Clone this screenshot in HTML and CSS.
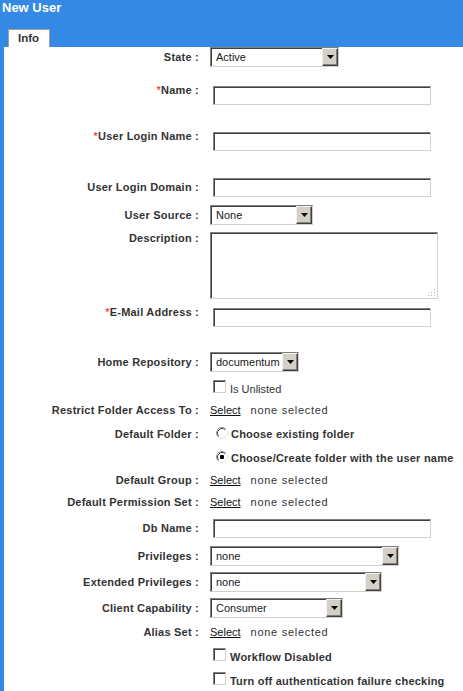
FILE: index.html
```html
<!DOCTYPE html>
<html>
<head>
<meta charset="utf-8">
<title>New User</title>
<link rel="stylesheet" href="styles.css">
</head>
<body>
<div class="title">New User</div>
<div class="tabs"><div class="tab">Info</div></div>
<div class="panel">
  <div class="form">
    <div class="row">
      <div class="lbl">State :</div>
      <div class="fld"><div class="select w-state"><span class="val">Active</span><span class="btn"><svg width="7" height="4" viewBox="0 0 7 4"><polygon points="0,0 7,0 3.5,4" fill="#000"/></svg></span></div></div>
    </div>
    <div class="row req-row mt17">
      <div class="lbl"><span class="req">*</span>Name :</div>
      <div class="fld"><div class="input"></div></div>
    </div>
    <div class="row req-row mt25">
      <div class="lbl"><span class="req">*</span>User Login Name :</div>
      <div class="fld"><div class="input"></div></div>
    </div>
    <div class="row mt27">
      <div class="lbl">User Login Domain :</div>
      <div class="fld"><div class="input"></div></div>
    </div>
    <div class="row mt8">
      <div class="lbl">User Source :</div>
      <div class="fld"><div class="select w-source"><span class="val">None</span><span class="btn"><svg width="7" height="4" viewBox="0 0 7 4"><polygon points="0,0 7,0 3.5,4" fill="#000"/></svg></span></div></div>
    </div>
    <div class="row top-row mt7">
      <div class="lbl">Description :</div>
      <div class="fld"><div class="textarea"><svg class="grip" width="9" height="9" viewBox="0 0 9 9"><g fill="#b0b0b0"><rect x="7" y="1" width="1" height="1"/><rect x="4" y="4" width="1" height="1"/><rect x="7" y="4" width="1" height="1"/><rect x="1" y="7" width="1" height="1"/><rect x="4" y="7" width="1" height="1"/><rect x="7" y="7" width="1" height="1"/></g></svg></div></div>
    </div>
    <div class="row req-row mt7">
      <div class="lbl"><span class="req">*</span>E-Mail Address :</div>
      <div class="fld"><div class="input"></div></div>
    </div>
    <div class="row mt25">
      <div class="lbl">Home Repository :</div>
      <div class="fld"><div class="select w-repo"><span class="val">documentum</span><span class="btn"><svg width="7" height="4" viewBox="0 0 7 4"><polygon points="0,0 7,0 3.5,4" fill="#000"/></svg></span></div></div>
    </div>
    <div class="row mt8">
      <div class="lbl"></div>
      <div class="fld check"><span class="cb"></span><span class="cb-text">Is Unlisted</span></div>
    </div>
    <div class="row mt8">
      <div class="lbl">Restrict Folder Access To :</div>
      <div class="fld text"><a class="link">Select</a><span class="none">none selected</span></div>
    </div>
    <div class="row mt11">
      <div class="lbl">Default Folder :</div>
      <div class="fld text"><svg class="radio" width="12" height="12" viewBox="0 0 12 12"><circle cx="6" cy="6" r="5.5" fill="#fff"/><path d="M2.11 9.89 A5.5 5.5 0 0 1 9.89 2.11" fill="none" stroke="#9a9a9a" stroke-width="1"/><path d="M2.82 9.18 A4.5 4.5 0 0 1 9.18 2.82" fill="none" stroke="#404040" stroke-width="1"/><path d="M9.89 2.11 A5.5 5.5 0 0 1 2.11 9.89" fill="none" stroke="#e4e2dc" stroke-width="1"/></svg><span class="radio-text">Choose existing folder</span></div>
    </div>
    <div class="row mt11">
      <div class="lbl"></div>
      <div class="fld text"><svg class="radio" width="12" height="12" viewBox="0 0 12 12"><circle cx="6" cy="6" r="5.5" fill="#fff"/><path d="M2.11 9.89 A5.5 5.5 0 0 1 9.89 2.11" fill="none" stroke="#9a9a9a" stroke-width="1"/><path d="M2.82 9.18 A4.5 4.5 0 0 1 9.18 2.82" fill="none" stroke="#404040" stroke-width="1"/><path d="M9.89 2.11 A5.5 5.5 0 0 1 2.11 9.89" fill="none" stroke="#e4e2dc" stroke-width="1"/><rect x="4" y="4" width="4" height="4" rx="1" fill="#000"/></svg><span class="radio-text">Choose/Create folder with the user name</span></div>
    </div>
    <div class="row mt9">
      <div class="lbl">Default Group :</div>
      <div class="fld text"><a class="link">Select</a><span class="none">none selected</span></div>
    </div>
    <div class="row mt9">
      <div class="lbl">Default Permission Set :</div>
      <div class="fld text"><a class="link">Select</a><span class="none">none selected</span></div>
    </div>
    <div class="row mt10">
      <div class="lbl">Db Name :</div>
      <div class="fld"><div class="input"></div></div>
    </div>
    <div class="row mt8">
      <div class="lbl">Privileges :</div>
      <div class="fld"><div class="select w-priv"><span class="val">none</span><span class="btn"><svg width="7" height="4" viewBox="0 0 7 4"><polygon points="0,0 7,0 3.5,4" fill="#000"/></svg></span></div></div>
    </div>
    <div class="row mt6">
      <div class="lbl">Extended Privileges :</div>
      <div class="fld"><div class="select w-ext"><span class="val">none</span><span class="btn"><svg width="7" height="4" viewBox="0 0 7 4"><polygon points="0,0 7,0 3.5,4" fill="#000"/></svg></span></div></div>
    </div>
    <div class="row mt6">
      <div class="lbl">Client Capability :</div>
      <div class="fld"><div class="select w-client"><span class="val">Consumer</span><span class="btn"><svg width="7" height="4" viewBox="0 0 7 4"><polygon points="0,0 7,0 3.5,4" fill="#000"/></svg></span></div></div>
    </div>
    <div class="row mt8">
      <div class="lbl">Alias Set :</div>
      <div class="fld text"><a class="link">Select</a><span class="none">none selected</span></div>
    </div>
    <div class="row mt9">
      <div class="lbl"></div>
      <div class="fld check"><span class="cb"></span><span class="cb-text bold">Workflow Disabled</span></div>
    </div>
    <div class="row mt8">
      <div class="lbl"></div>
      <div class="fld check"><span class="cb"></span><span class="cb-text bold">Turn off authentication failure checking</span></div>
    </div>
  </div>
</div>
</body>
</html>
```

FILE: styles.css
```css
* { box-sizing: border-box; }
html, body { margin: 0; padding: 0; }
body {
  background: #3389e4;
  width: 463px;
  height: 691px;
  overflow: hidden;
  font-family: "Liberation Sans", Arial, sans-serif;
  font-size: 11px;
  color: #333;
}
.title {
  height: 29px;
  padding-left: 2px;
  color: #fff;
  font-weight: bold;
  font-size: 13px;
  line-height: 15px;
}
.tabs {
  height: 18px;
  padding-left: 8px;
  display: flex;
  align-items: flex-end;
}
.tab {
  width: 42px;
  height: 18px;
  background: #fff;
  border: 1px solid #a0a0a0;
  border-bottom: 0;
  font-weight: bold;
  font-size: 11.5px;
  line-height: 17px;
  text-align: center;
  padding-right: 1px;
  color: #333;
}
.panel {
  margin-left: 4px;
  background: #fff;
  height: 644px;
}
.form { display: flex; flex-direction: column; }
.row {
  display: grid;
  grid-template-columns: 195px 1fr;
  column-gap: 11px;
  align-items: center;
}
.req-row, .top-row { align-items: start; }
.req-row .input { margin-top: 2px; }
.mt6 { margin-top: 6px; }
.mt7 { margin-top: 7px; }
.mt8 { margin-top: 8px; }
.mt9 { margin-top: 9px; }
.mt10 { margin-top: 10px; }
.mt11 { margin-top: 11px; }
.mt17 { margin-top: 17px; }
.mt25 { margin-top: 25px; }
.mt27 { margin-top: 27px; }
.lbl {
  text-align: right;
  font-weight: bold;
  letter-spacing: 0.22px;
  line-height: 13px;
  white-space: nowrap;
  color: #333;
}
.req { color: #f00; font-weight: normal; }
.fld {
  display: flex;
  align-items: center;
  min-width: 0;
  line-height: 13px;
  white-space: nowrap;
}
.select {
  display: flex;
  align-items: stretch;
  height: 20px;
  border: 1px solid;
  border-color: #808080 #d4d0c8 #d4d0c8 #808080;
  box-shadow: inset 1px 1px 0 #404040;
  background: #fff;
}
.select .val {
  flex: 1;
  padding-left: 5px;
  padding-top: 1px;
  line-height: 17px;
  color: #1a1a1a;
}
.select .btn {
  width: 16px;
  height: 18px;
  background: #d4d0c8;
  border: 1px solid;
  border-color: #f4f2ee #404040 #404040 #f4f2ee;
  box-shadow: inset -1px -1px 0 #808080;
  display: flex;
  align-items: center;
  justify-content: center;
}
.w-state { width: 129px; }
.w-source { width: 103px; }
.w-repo { width: 89px; }
.w-priv { width: 189px; }
.w-ext { width: 172px; }
.w-client { width: 133px; }
.input {
  width: 218px;
  height: 19px;
  margin-left: 3px;
  border: 1px solid;
  border-color: #808080 #d4d0c8 #d4d0c8 #808080;
  box-shadow: inset 1px 1px 0 #404040;
  background: #fff;
}
.textarea {
  width: 228px;
  height: 67px;
  border: 1px solid;
  border-color: #808080 #d4d0c8 #d4d0c8 #808080;
  box-shadow: inset 1px 1px 0 #404040;
  background: #fff;
  display: flex;
  align-items: flex-end;
  justify-content: flex-end;
  padding: 0 1px 1px 0;
}
.check { align-items: flex-end; }
.cb {
  width: 13px;
  height: 13px;
  margin-left: 3px;
  margin-bottom: 3px;
  border: 1px solid;
  border-color: #808080 #d4d0c8 #d4d0c8 #808080;
  box-shadow: inset 1px 1px 0 #404040;
  background: #fff;
  flex: none;
}
.cb-text { margin-left: 4px; color: #333; }
.bold { font-weight: bold; letter-spacing: 0.22px; }
.link {
  color: #111;
  text-decoration: underline;
}
.none {
  margin-left: 10px;
  letter-spacing: 0.72px;
  color: #333;
}
.radio {
  margin: -4px 0 0 6px;
  flex: none;
}
.radio-text {
  margin-left: 3px;
  font-weight: bold;
  letter-spacing: 0.22px;
  color: #333;
}
```
